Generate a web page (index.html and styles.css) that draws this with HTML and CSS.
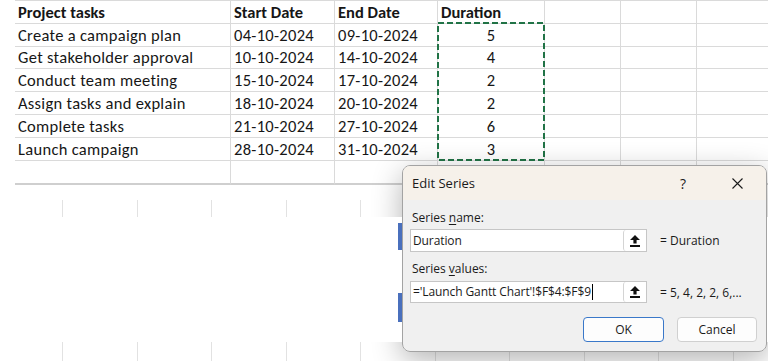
FILE: index.html
```html
<!DOCTYPE html>
<html>
<head>
<meta charset="utf-8">
<link rel="stylesheet" href="styles.css">
</head>
<body>
<div class="page">
  <div class="sheet">
    <div class="grid">
      <div class="c b">Project tasks</div><div class="c b">Start Date</div><div class="c b">End Date</div><div class="c b">Duration</div><div class="c"></div><div class="c"></div><div class="c last"></div>
      <div class="c">Create a campaign plan</div><div class="c">04-10-2024</div><div class="c">09-10-2024</div><div class="c n">5</div><div class="c"></div><div class="c"></div><div class="c last"></div>
      <div class="c">Get stakeholder approval</div><div class="c">10-10-2024</div><div class="c">14-10-2024</div><div class="c n">4</div><div class="c"></div><div class="c"></div><div class="c last"></div>
      <div class="c">Conduct team meeting</div><div class="c">15-10-2024</div><div class="c">17-10-2024</div><div class="c n">2</div><div class="c"></div><div class="c"></div><div class="c last"></div>
      <div class="c">Assign tasks and explain</div><div class="c">18-10-2024</div><div class="c">20-10-2024</div><div class="c n">2</div><div class="c"></div><div class="c"></div><div class="c last"></div>
      <div class="c">Complete tasks</div><div class="c">21-10-2024</div><div class="c">27-10-2024</div><div class="c n">6</div><div class="c"></div><div class="c"></div><div class="c last"></div>
      <div class="c">Launch campaign</div><div class="c">28-10-2024</div><div class="c">31-10-2024</div><div class="c n">3</div><div class="c"></div><div class="c"></div><div class="c last"></div>
      <div class="c end"></div><div class="c end"></div><div class="c end"></div><div class="c end"></div><div class="c end"></div><div class="c end"></div><div class="c end last"></div>
    </div>
    <div class="marquee">
      <svg width="108" height="139" viewBox="0 0 108 139"><rect x="1" y="1" width="106" height="137" fill="none" stroke="#217346" stroke-width="2" stroke-dasharray="6 3"/></svg>
    </div>
  </div>

  <div class="lower">
    <div class="ticks top">
      <span class="t w63"></span><span class="t w75"></span><span class="t w74"></span><span class="t w75"></span><span class="t w74"></span><span class="t w75"></span><span class="t w74"></span><span class="t w75"></span><span class="t w74"></span><span class="t w75"></span>
    </div>
    <div class="chart">
      <span class="bar bar1"></span>
      <span class="bar bar2"></span>
    </div>
    <div class="ticks bottom">
      <span class="t w63"></span><span class="t w75"></span><span class="t w74"></span><span class="t w75"></span><span class="t w74"></span><span class="t w75"></span><span class="t w74"></span><span class="t w75"></span><span class="t w74"></span><span class="t w75"></span>
    </div>
  </div>

  <div class="dialog">
    <div class="panel">
      <div class="titlebar">
        <span class="title">Edit Series</span>
        <span class="help">?</span>
        <span class="close">
          <svg width="11" height="11" viewBox="0 0 11 11"><path d="M0.5 0.5 L10.5 10.5 M10.5 0.5 L0.5 10.5" stroke="#1a1a1a" stroke-width="1.1" fill="none"/></svg>
        </span>
      </div>
      <div class="body">
        <div class="label">Series <u>n</u>ame:</div>
        <div class="field-row">
          <div class="input tall">
            <span class="val">Duration</span>
            <span class="pick">
              <svg width="10" height="12" viewBox="0 0 10 12"><path d="M5 0 L10 5 H6.6 V8.6 H3.4 V5 H0 Z" fill="#111"/><rect x="0" y="10" width="10" height="2" fill="#111"/></svg>
            </span>
          </div>
          <span class="result">= Duration</span>
        </div>
        <div class="label second">Series <u>v</u>alues:</div>
        <div class="field-row tight">
          <div class="input">
            <span class="val">='Launch Gantt Chart'!$F$4:$F$9<span class="caret"></span></span>
            <span class="pick">
              <svg width="10" height="12" viewBox="0 0 10 12"><path d="M5 0 L10 5 H6.6 V8.6 H3.4 V5 H0 Z" fill="#111"/><rect x="0" y="10" width="10" height="2" fill="#111"/></svg>
            </span>
          </div>
          <span class="result">= 5, 4, 2, 2, 6,...</span>
        </div>
        <div class="buttons">
          <span class="btn ok">OK</span>
          <span class="btn cancel">Cancel</span>
        </div>
      </div>
    </div>
  </div>
</div>
</body>
</html>
```

FILE: styles.css
```css
html, body {
  margin: 0;
  padding: 0;
  background: #ffffff;
}
body {
  width: 768px;
  height: 361px;
  overflow: hidden;
}
.page {
  position: relative;
  width: 768px;
  height: 361px;
  overflow: hidden;
  font-family: "Carlito", "Lato", "Liberation Sans", sans-serif;
  color: #161616;
}

/* spreadsheet */
.sheet {
  position: relative;
  margin-left: 15px;
}
.grid {
  display: grid;
  grid-template-columns: 216px 104px 103px 107px 76px 76px 1fr;
  grid-template-rows: 23px 23px 22px 23px 23px 23px 23px 24px;
  border-top: 1px solid #dadada;
}
.c {
  box-sizing: border-box;
  border-right: 1px solid #dadada;
  border-bottom: 1px solid #dadada;
  padding: 0 3px 1px 3px;
  font-size: 16.5px;
  letter-spacing: 0.3px;
  line-height: 20px;
  display: flex;
  align-items: flex-end;
  white-space: nowrap;
  overflow: hidden;
}
.c.last { border-right: none; }
.c.b { font-weight: bold; letter-spacing: 0; }
.c.n { justify-content: center; }
.c.end { border-bottom: 2px solid #cfcfcf; }

.marquee {
  position: absolute;
  left: 422px;
  top: 22px;
  width: 108px;
  height: 139px;
}
.marquee svg { display: block; }

/* lower sheet area with chart */
.lower {
  padding-top: 15px;
}
.ticks {
  display: flex;
}
.ticks.top { height: 17px; }
.ticks.bottom { height: 19px; }
.t {
  box-sizing: border-box;
  flex: none;
  border-right: 1px solid #e2e2e2;
}
.w63 { width: 63px; }
.w74 { width: 74px; }
.w75 { width: 75px; }
.chart {
  position: relative;
  z-index: 2;
  margin-left: 15px;
  height: 125px;
  background: #ffffff;
}
.bar {
  position: absolute;
  left: 383px;
  width: 12px;
  background: #4a70bd;
}
.bar1 { top: 6px; height: 27px; }
.bar2 { top: 76px; height: 29px; }

/* dialog */
.dialog {
  position: absolute;
  left: 402px;
  top: 165px;
  width: 365px;
  height: 187px;
}
.dialog::before {
  content: "";
  position: absolute;
  inset: 0;
  z-index: 1;
  border-radius: 8px;
  box-shadow: 0 8px 30px rgba(0, 0, 0, 0.3);
}
.panel {
  position: relative;
  z-index: 3;
  box-sizing: border-box;
  width: 365px;
  height: 187px;
  border: 1px solid #a3a3a3;
  border-radius: 8px;
  background: #f0f0f0;
  overflow: hidden;
  font-family: "Open Sans", "Noto Sans", sans-serif;
  color: #1a1a1a;
}
.titlebar {
  height: 34px;
  background: #f6f1ea;
  display: flex;
  align-items: center;
  padding-left: 9px;
}
.title {
  flex: 1;
  font-size: 13px;
}
.help {
  width: 20px;
  text-align: center;
  font-size: 14px;
  margin-right: 29px;
}
.close {
  width: 30px;
  margin-right: 14px;
  display: flex;
  justify-content: center;
  align-items: center;
}
.close svg { display: block; }
.body {
  padding: 10px 9px 0 7px;
  display: flex;
  flex-direction: column;
}
.label {
  font-size: 12px;
  line-height: 16px;
  padding-left: 2px;
}
.label u { text-underline-offset: 2px; }
.label.second { margin-top: 9px; }
.field-row {
  display: flex;
  align-items: center;
  gap: 13px;
  margin-top: 3px;
}
.field-row.tight { margin-top: 4px; }
.input {
  box-sizing: border-box;
  width: 237px;
  height: 22px;
  border: 1px solid #c6c6c6;
  background: #ffffff;
  display: flex;
  align-items: center;
}
.input.tall { height: 23px; }
.val {
  flex: 1;
  padding-left: 2px;
  font-size: 12px;
  line-height: 16px;
  white-space: nowrap;
  display: flex;
  align-items: center;
  letter-spacing: -0.1px;
}
.caret {
  display: inline-block;
  width: 1px;
  height: 16px;
  background: #000;
  margin-left: 1px;
}
.pick {
  box-sizing: border-box;
  width: 23px;
  height: 100%;
  border-left: 1px solid #d4d4d4;
  border-radius: 3px;
  background: #ffffff;
  display: flex;
  justify-content: center;
  align-items: center;
}
.pick svg { display: block; }
.result {
  font-size: 12px;
  white-space: nowrap;
}
.buttons {
  display: flex;
  justify-content: flex-end;
  gap: 13px;
  margin-top: 14px;
}
.btn {
  box-sizing: border-box;
  height: 25px;
  border: 1px solid #d0d0d0;
  border-radius: 4px;
  background: #fdfdfd;
  font-size: 12px;
  display: flex;
  align-items: center;
  justify-content: center;
}
.btn.ok {
  width: 81px;
  border-color: #3a78c9;
}
.btn.cancel { width: 80px; }
```
